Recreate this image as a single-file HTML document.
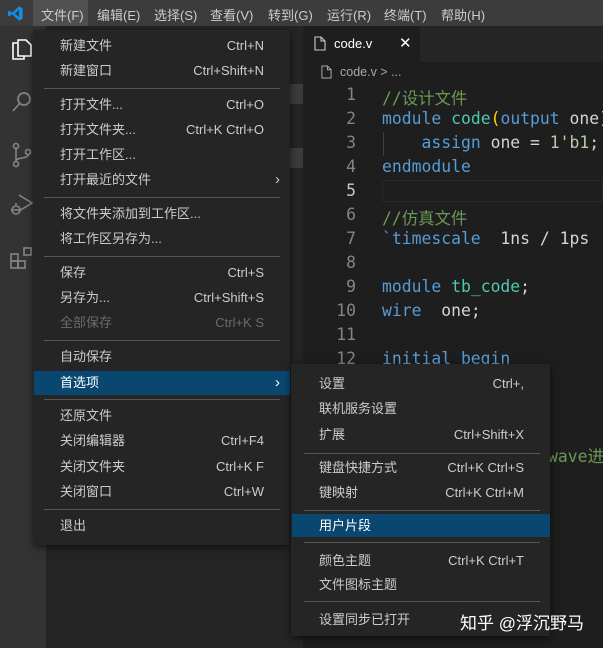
<!DOCTYPE html>
<html><head><meta charset="utf-8"><style>
*{margin:0;padding:0;box-sizing:border-box}
body{width:603px;height:648px;overflow:hidden;background:#1e1e1e;position:relative;font-family:"Liberation Sans","Noto Sans CJK SC",sans-serif;font-size:13px;color:#ccc}
.abs{position:absolute}
#title{left:0;top:0;width:603px;height:26px;background:#3c3c3c}
#title span{position:absolute;top:5px;font-size:13px;color:#ccc}
#act{left:0;top:26px;width:46px;height:622px;background:#333}
#side{left:46px;top:26px;width:257px;height:622px;background:#252526}
#tabs{left:303px;top:26px;width:300px;height:36px;background:#252526}
#tab{left:303px;top:26px;width:117px;height:36px;background:#1e1e1e}
.code{font-family:"DejaVu Sans Mono","Liberation Mono",monospace;font-size:16.4px;white-space:pre}
.ln{position:absolute;left:303px;width:53px;text-align:right;color:#858585}
.cl{position:absolute;left:382px;color:#d4d4d4}
.kw{color:#569cd6}.fn{color:#4ec9b0}.cm{color:#6a9955}.nm{color:#b5cea8}
.menu{background:#252526;box-shadow:0 2px 8px rgba(0,0,0,.6)}
.it{position:absolute;height:25px;line-height:25px;color:#ccc;font-size:13px}
.it .k{position:absolute;right:0;top:0}
.sep{position:absolute;height:1px;background:#555}
.hl{position:absolute;background:#094771}
</style></head><body>
<div class="abs" id="title">
<svg class="abs" style="left:7px;top:5px" width="17" height="17" viewBox="0 0 24 24"><path d="M17 2 L22 4.5 V19.5 L17 22 L7 13 L3 16 L1.5 15 V9 L3 8 L7 11 Z M17 7 L11 12 L17 17 Z" fill="#0e8ee9"/></svg>
<div class="abs" style="left:33px;top:0;width:55px;height:26px;background:#505050"></div>
<span style="left:41px">文件(F)</span><span style="left:97px">编辑(E)</span><span style="left:154px">选择(S)</span><span style="left:210px">查看(V)</span><span style="left:268px">转到(G)</span><span style="left:327px">运行(R)</span><span style="left:384px">终端(T)</span><span style="left:441px">帮助(H)</span>
</div>
<div class="abs" id="act"></div>
<svg class="abs" style="left:10px;top:38px" width="24" height="24" viewBox="0 0 24 24" fill="none" stroke="#fff" stroke-width="1.6"><path d="M7 5H3v16h11v-3"/><path d="M8 2h8l5 5v11H8z"/></svg>
<svg class="abs" style="left:10px;top:90px" width="24" height="24" viewBox="0 0 24 24" fill="none" stroke="#858585" stroke-width="1.7"><circle cx="14" cy="9" r="6"/><path d="M10 13L3 21"/></svg>
<svg class="abs" style="left:10px;top:142px" width="24" height="26" viewBox="0 0 24 26" fill="none" stroke="#858585" stroke-width="1.6"><circle cx="6" cy="4" r="2.5"/><circle cx="6" cy="22" r="2.5"/><circle cx="18" cy="10" r="2.5"/><path d="M6 7v12M18 13c0 4-12 2-12 6"/></svg>
<svg class="abs" style="left:9px;top:192px" width="26" height="26" viewBox="0 0 26 26" fill="none" stroke="#858585" stroke-width="1.6"><path d="M10 3l13 8-13 8"/><circle cx="7" cy="18" r="4"/><path d="M2 18h10M7 13v-2"/></svg>
<svg class="abs" style="left:9px;top:245px" width="26" height="26" viewBox="0 0 26 26" fill="none" stroke="#858585" stroke-width="1.6"><rect x="2" y="9" width="7" height="7"/><rect x="2" y="16" width="7" height="7"/><rect x="9" y="16" width="7" height="7"/><rect x="15" y="3" width="7" height="7"/></svg>
<div class="abs" id="side"></div>
<div class="abs" style="left:290px;top:84px;width:13px;height:20px;background:#3c3c3c"></div>
<div class="abs" style="left:290px;top:148px;width:13px;height:20px;background:#3c3c3c"></div>
<div class="abs" id="tabs"></div>
<div class="abs" id="tab"></div>
<svg class="abs" style="left:314px;top:36px" width="12" height="15" viewBox="0 0 12 15" fill="none" stroke="#ccc" stroke-width="1.1"><path d="M1 1h6l4 4v9H1z M7 1v4h4"/></svg>
<div class="abs" style="left:334px;top:36px;color:#fff;font-size:13px">code.v</div>
<div class="abs" style="left:399px;top:34px;color:#fff;font-size:15px">✕</div>
<svg class="abs" style="left:321px;top:65px" width="11" height="14" viewBox="0 0 12 15" fill="none" stroke="#aaa" stroke-width="1.1"><path d="M1 1h6l4 4v9H1z M7 1v4h4"/></svg>
<div class="abs" style="left:340px;top:65px;color:#a9a9a9;font-size:12.5px">code.v &gt; ...</div>
<div class="abs" style="left:382px;top:180px;width:221px;height:22px;border:1px solid #282828"></div>
<div class="abs" style="left:383px;top:132px;width:1px;height:24px;background:#404040"></div>
<div class="code">
<div class="ln" style="top:85px">1</div><div class="cl cm" style="top:85px">//设计文件</div>
<div class="ln" style="top:109px">2</div><div class="cl" style="top:109px"><span class="kw">module</span> <span class="fn">code</span><span style="color:#ffd700">(</span><span class="kw">output</span> one)</div>
<div class="ln" style="top:133px">3</div><div class="cl" style="top:133px">    <span class="kw">assign</span> one = <span class="nm">1'b1</span>;</div>
<div class="ln" style="top:157px">4</div><div class="cl kw" style="top:157px">endmodule</div>
<div class="ln" style="top:181px;color:#c6c6c6">5</div>
<div class="ln" style="top:205px">6</div><div class="cl cm" style="top:205px">//仿真文件</div>
<div class="ln" style="top:229px">7</div><div class="cl" style="top:229px"><span class="kw">`timescale</span>  1ns / 1ps</div>
<div class="ln" style="top:253px">8</div>
<div class="ln" style="top:277px">9</div><div class="cl" style="top:277px"><span class="kw">module</span> <span class="fn">tb_code</span>;</div>
<div class="ln" style="top:301px">10</div><div class="cl" style="top:301px"><span class="kw">wire</span>  one;</div>
<div class="ln" style="top:325px">11</div>
<div class="ln" style="top:349px">12</div><div class="cl kw" style="top:349px">initial begin</div>
<div class="cl cm" style="top:443px;left:548px">wave进</div>
</div>

<div class="abs menu" style="left:34px;top:30px;width:256px;height:515px">
<div class="hl" style="left:0;top:341px;width:256px;height:24px"></div>
<div class="it" style="left:26px;top:3px;width:204px">新建文件<span class="k">Ctrl+N</span></div>
<div class="it" style="left:26px;top:28px;width:204px">新建窗口<span class="k">Ctrl+Shift+N</span></div>
<div class="sep" style="left:10px;top:58px;width:236px"></div>
<div class="it" style="left:26px;top:62px;width:204px">打开文件...<span class="k">Ctrl+O</span></div>
<div class="it" style="left:26px;top:87px;width:204px">打开文件夹...<span class="k">Ctrl+K Ctrl+O</span></div>
<div class="it" style="left:26px;top:112px;width:204px">打开工作区...</div>
<div class="it" style="left:26px;top:137px;width:220px">打开最近的文件<span class="k" style="font-size:15px">›</span></div>
<div class="sep" style="left:10px;top:167px;width:236px"></div>
<div class="it" style="left:26px;top:171px;width:204px">将文件夹添加到工作区...</div>
<div class="it" style="left:26px;top:196px;width:204px">将工作区另存为...</div>
<div class="sep" style="left:10px;top:226px;width:236px"></div>
<div class="it" style="left:26px;top:230px;width:204px">保存<span class="k">Ctrl+S</span></div>
<div class="it" style="left:26px;top:255px;width:204px">另存为...<span class="k">Ctrl+Shift+S</span></div>
<div class="it" style="left:26px;top:280px;width:204px;color:#6b6b6b">全部保存<span class="k">Ctrl+K S</span></div>
<div class="sep" style="left:10px;top:310px;width:236px"></div>
<div class="it" style="left:26px;top:314px;width:204px">自动保存</div>
<div class="it" style="left:26px;top:340px;width:220px;color:#fff">首选项<span class="k" style="font-size:15px">›</span></div>
<div class="sep" style="left:10px;top:369px;width:236px"></div>
<div class="it" style="left:26px;top:373px;width:204px">还原文件</div>
<div class="it" style="left:26px;top:398px;width:204px">关闭编辑器<span class="k">Ctrl+F4</span></div>
<div class="it" style="left:26px;top:424px;width:204px">关闭文件夹<span class="k">Ctrl+K F</span></div>
<div class="it" style="left:26px;top:449px;width:204px">关闭窗口<span class="k">Ctrl+W</span></div>
<div class="sep" style="left:10px;top:479px;width:236px"></div>
<div class="it" style="left:26px;top:483px;width:204px">退出</div>
</div>

<div class="abs menu" style="left:291px;top:364px;width:259px;height:272px">
<div class="hl" style="left:1px;top:150px;width:258px;height:23px"></div>
<div class="it" style="left:28px;top:7px;width:205px">设置<span class="k">Ctrl+,</span></div>
<div class="it" style="left:28px;top:32px;width:205px">联机服务设置</div>
<div class="it" style="left:28px;top:58px;width:205px">扩展<span class="k">Ctrl+Shift+X</span></div>
<div class="sep" style="left:13px;top:89px;width:236px"></div>
<div class="it" style="left:28px;top:91px;width:205px">键盘快捷方式<span class="k">Ctrl+K Ctrl+S</span></div>
<div class="it" style="left:28px;top:116px;width:205px">键映射<span class="k">Ctrl+K Ctrl+M</span></div>
<div class="sep" style="left:13px;top:146px;width:236px"></div>
<div class="it" style="left:28px;top:149px;width:205px;color:#fff">用户片段</div>
<div class="sep" style="left:13px;top:178px;width:236px"></div>
<div class="it" style="left:28px;top:184px;width:205px">颜色主题<span class="k">Ctrl+K Ctrl+T</span></div>
<div class="it" style="left:28px;top:208px;width:205px">文件图标主题</div>
<div class="sep" style="left:13px;top:237px;width:236px"></div>
<div class="it" style="left:28px;top:243px;width:205px">设置同步已打开</div>
</div>
<div class="abs" style="left:460px;top:609px;color:#fff;font-size:17px">知乎 @浮沉野马</div>
</body></html>
